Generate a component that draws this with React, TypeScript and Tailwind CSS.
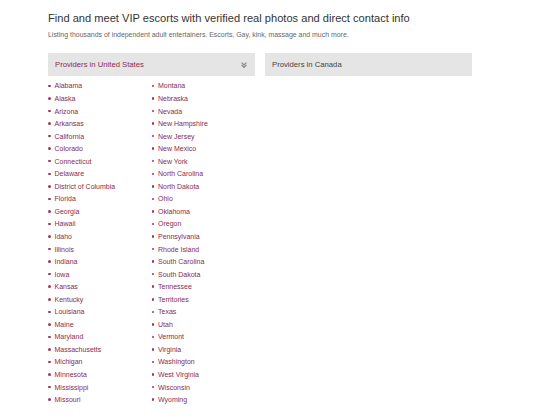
import React from "react";

const left = ["Alabama","Alaska","Arizona","Arkansas","California","Colorado","Connecticut","Delaware","District of Columbia","Florida","Georgia","Hawaii","Idaho","Illinois","Indiana","Iowa","Kansas","Kentucky","Louisiana","Maine","Maryland","Massachusetts","Michigan","Minnesota","Mississippi","Missouri"];
const right = ["Montana","Nebraska","Nevada","New Hampshire","New Jersey","New Mexico","New York","North Carolina","North Dakota","Ohio","Oklahoma","Oregon","Pennsylvania","Rhode Island","South Carolina","South Dakota","Tennessee","Territories","Texas","Utah","Vermont","Virginia","Washington","West Virginia","Wisconsin","Wyoming"];

function Col({ items }: { items: string[] }) {
  return (
    <ul className="w-[105px] flex flex-col">
      {items.map((s) => (
        <li key={s} className="h-[12.56px] flex items-center text-[7px] leading-none text-[#8c2a4f]">
          <span className="w-[2.5px] h-[2.5px] rounded-full bg-[#a8325c] mr-[4px]" />
          {s}
        </li>
      ))}
    </ul>
  );
}

export default function App() {
  return (
    <div className="w-[540px] h-[418px] bg-white overflow-hidden pl-[48px] pt-[11px]" style={{ fontFamily: '"Liberation Sans", Arial, sans-serif' }}>
      <h1 className="text-[11.1px] leading-[14px] text-[#333]">Find and meet VIP escorts with verified real photos and direct contact info</h1>
      <p className="text-[6.95px] leading-[10px] text-[#666] mt-[5px]">Listing thousands of independent adult entertainers. Escorts, Gay, kink, massage and much more.</p>
      <div className="flex gap-[10px] mt-[13px]">
        <div className="w-[207px]">
          <div className="h-[23px] bg-[#e5e5e5] flex items-center justify-between pl-[7px] pr-[8px]">
            <span className="text-[7.7px] text-[#8c2a4f]">Providers in United States</span>
            <svg width="6" height="6" viewBox="0 0 10 10" fill="none" stroke="#888" strokeWidth="2">
              <path d="M1 1 L5 5 L9 1" />
              <path d="M1 5 L5 9 L9 5" />
            </svg>
          </div>
          <div className="flex mt-[3.7px]">
            <Col items={left} />
            <Col items={right} />
          </div>
        </div>
        <div className="w-[207px]">
          <div className="h-[23px] bg-[#e5e5e5] flex items-center pl-[7px]">
            <span className="text-[7.7px] text-[#444]">Providers in Canada</span>
          </div>
        </div>
      </div>
    </div>
  );
}
